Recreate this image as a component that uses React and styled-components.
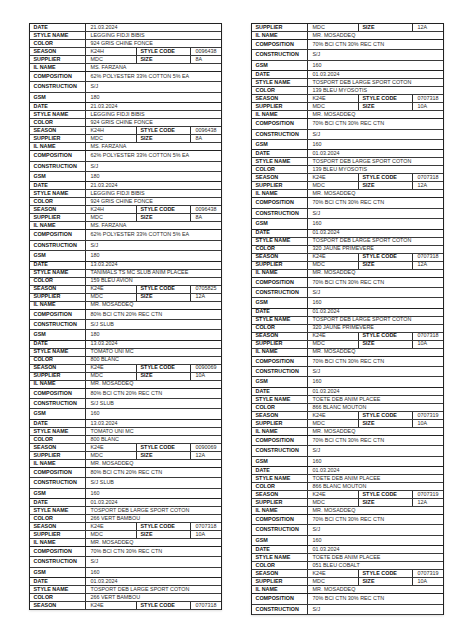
import React from 'react';
import styled, { createGlobalStyle } from 'styled-components';

const GlobalStyle = createGlobalStyle`
  html, body {
    margin: 0;
    padding: 0;
    background: #ffffff;
  }
  * {
    box-sizing: border-box;
  }
`;

const Page = styled.div`
  display: flex;
  align-items: flex-start;
  gap: 29px;
  padding: 23px 0 0 29px;
  width: 474px;
  height: 632px;
  overflow: hidden;
  font-family: 'Liberation Sans', Arial, sans-serif;
`;

const Sheet = styled.div`
  width: 193px;
  border-left: 1.5px solid #222;
  border-right: 1.5px solid #222;
  border-top: 1.5px solid #222;
  box-shadow: 0 1px 2px rgba(0, 0, 0, 0.12);
`;

const Row = styled.div`
  display: grid;
  grid-template-columns: 56px 51px 54px 1fr;
  height: ${(p) => (p.$tall ? '10.4px' : '8px')};
  border-bottom: ${(p) => (p.$heavy ? '1.6px solid #222' : '1px solid #3a3a3a')};
`;

const Cell = styled.div`
  grid-column: span ${(p) => p.$span || 1};
  display: flex;
  align-items: center;
  padding-left: ${(p) => (p.$label ? '3.5px' : '4.5px')};
  border-right: ${(p) => (p.$last ? 'none' : '1px solid #2e2e2e')};
  font-size: 5.4px;
  line-height: 1;
  white-space: nowrap;
  overflow: hidden;
  font-weight: ${(p) => (p.$label ? 700 : 400)};
  color: ${(p) => (p.$label ? '#141414' : '#2c2c2c')};
`;

function Wide({ label, value, tall, heavy }) {
  return (
    <Row $tall={tall} $heavy={heavy}>
      <Cell $label>{label}</Cell>
      <Cell $span={3} $last>{value}</Cell>
    </Row>
  );
}

function Split({ label, value, label2, value2 }) {
  return (
    <Row>
      <Cell $label>{label}</Cell>
      <Cell>{value}</Cell>
      <Cell $label>{label2}</Cell>
      <Cell $last>{value2}</Cell>
    </Row>
  );
}

// full record -> list of rows, sliced when a record runs over a column
function recordRows(r) {
  return [
    { k: 'date', el: <Wide label="DATE" value={r.date} /> },
    { k: 'style', el: <Wide label="STYLE NAME" value={r.style} /> },
    { k: 'color', el: <Wide label="COLOR" value={r.color} /> },
    { k: 'season', el: <Split label="SEASON" value={r.season} label2="STYLE CODE" value2={r.code} /> },
    { k: 'supplier', el: <Split label="SUPPLIER" value="MDC" label2="SIZE" value2={r.size} /> },
    { k: 'il', el: <Wide label="IL NAME" value={r.il} heavy /> },
    { k: 'comp', el: <Wide label="COMPOSITION" value={r.comp} tall /> },
    { k: 'cons', el: <Wide label="CONSTRUCTION" value={r.cons} tall /> },
    { k: 'gsm', el: <Wide label="GSM" value={r.gsm} tall heavy /> },
  ];
}

const legging = {
  date: '21.03.2024',
  style: 'LEGGING FIDJI BIBIS',
  color: '924 GRIS CHINE FONCE',
  season: 'K24H',
  code: '0096438',
  size: '8A',
  il: 'MS. FARZANA',
  comp: '62% POLYESTER 33% COTTON 5% EA',
  cons: 'S/J',
  gsm: '180',
};

const mosaddeq = {
  season: 'K24E',
  il: 'MR. MOSADDEQ',
};

const tosport = {
  ...mosaddeq,
  date: '01.03.2024',
  style: 'TOSPORT DEB LARGE SPORT COTON',
  code: '0707318',
  comp: '70% BCI CTN 30% REC CTN',
  cons: 'S/J',
  gsm: '160',
};

const toete = {
  ...tosport,
  style: 'TOETE DEB ANIM PLACEE',
  code: '0707319',
};

const leftColumn = [
  { r: legging },
  { r: legging },
  { r: legging },
  {
    r: {
      ...mosaddeq,
      date: '13.03.2024',
      style: 'TANIMALS TS MC SLUB ANIM PLACEE',
      color: '159 BLEU AVION',
      code: '0705825',
      size: '12A',
      comp: '80% BCI CTN 20% REC CTN',
      cons: 'S/J SLUB',
      gsm: '180',
    },
  },
  {
    r: {
      ...mosaddeq,
      date: '13.03.2024',
      style: 'TOMATO UNI MC',
      color: '800 BLANC',
      code: '0090069',
      size: '10A',
      comp: '80% BCI CTN 20% REC CTN',
      cons: 'S/J SLUB',
      gsm: '160',
    },
  },
  {
    r: {
      ...mosaddeq,
      date: '13.03.2024',
      style: 'TOMATO UNI MC',
      color: '800 BLANC',
      code: '0090069',
      size: '12A',
      comp: '80% BCI CTN 20% REC CTN',
      cons: 'S/J SLUB',
      gsm: '160',
    },
  },
  { r: { ...tosport, color: '266 VERT BAMBOU', size: '10A' } },
  { r: { ...tosport, color: '266 VERT BAMBOU', size: '10A' }, to: 4 },
];

const rightColumn = [
  { r: { ...tosport, color: '266 VERT BAMBOU', size: '12A' }, from: 4 },
  { r: { ...tosport, color: '139 BLEU MYOSOTIS', size: '10A' } },
  { r: { ...tosport, color: '139 BLEU MYOSOTIS', size: '12A' } },
  { r: { ...tosport, color: '320 JAUNE PRIMEVERE', size: '12A' } },
  { r: { ...tosport, color: '320 JAUNE PRIMEVERE', size: '10A' } },
  { r: { ...toete, color: '866 BLANC MOUTON', size: '10A' } },
  { r: { ...toete, color: '866 BLANC MOUTON', size: '12A' } },
  { r: { ...toete, color: '051 BLEU COBALT', size: '10A' }, to: 8 },
];

function Column({ records }) {
  return (
    <Sheet>
      {records.map((item, i) =>
        recordRows(item.r)
          .slice(item.from || 0, item.to || 9)
          .map((row) => <React.Fragment key={i + row.k}>{row.el}</React.Fragment>)
      )}
    </Sheet>
  );
}

export default function App() {
  return (
    <>
      <GlobalStyle />
      <Page>
        <Column records={leftColumn} />
        <Column records={rightColumn} />
      </Page>
    </>
  );
}
